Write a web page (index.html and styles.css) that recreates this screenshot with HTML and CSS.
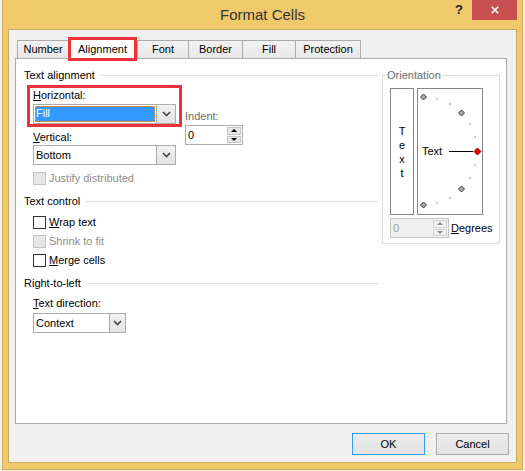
FILE: index.html
```html
<!DOCTYPE html>
<html lang="en">
<head>
    <meta charset="UTF-8">
    <title>Format Cells</title>
    <link rel="stylesheet" href="styles.css">
</head>
<body>
    <div class="window">
        <div class="titlebar">
            <span></span>
            <span class="title">Format Cells</span>
            <div class="controls">
                <span class="help">?</span>
                <span class="close">
                    <svg width="10" height="10" viewBox="0 0 10 10"><path d="M1 1L9 9M9 1L1 9" stroke="#fff" stroke-width="2"/></svg>
                </span>
            </div>
        </div>

        <div class="client">
            <div class="tabs">
                <div class="tab tab-number">Number</div>
                <div class="tab active">Alignment</div>
                <div class="tab tab-font">Font</div>
                <div class="tab tab-border">Border</div>
                <div class="tab tab-fill">Fill</div>
                <div class="tab tab-protection">Protection</div>
            </div>

            <div class="panel">
                <div class="left-col">
                    <div class="group-head">Text alignment</div>

                    <div class="align-row">
                        <div class="highlight">
                            <div class="label"><u>H</u>orizontal:</div>
                            <div class="combo">
                                <span class="combo-value selected">Fill</span>
                                <span class="combo-btn"><svg width="9" height="6" viewBox="0 0 9 6"><path d="M1 1l3.5 3.5L8 1" fill="none" stroke="#444" stroke-width="1.6"/></svg></span>
                            </div>
                        </div>
                        <div class="indent">
                            <div class="label muted">Indent:</div>
                            <div class="spin">
                                <span class="spin-value">0</span>
                                <span class="spin-btns">
                                    <span class="spin-up"></span>
                                    <span class="spin-down"></span>
                                </span>
                            </div>
                        </div>
                    </div>

                    <div class="label field-label vertical-label"><u>V</u>ertical:</div>
                    <div class="combo field-combo">
                        <span class="combo-value">Bottom</span>
                        <span class="combo-btn"><svg width="9" height="6" viewBox="0 0 9 6"><path d="M1 1l3.5 3.5L8 1" fill="none" stroke="#444" stroke-width="1.6"/></svg></span>
                    </div>
                    <div class="check-row justify-row disabled">
                        <span class="checkbox"></span>Justify distributed
                    </div>

                    <div class="group-head">Text control</div>
                    <div class="check-row wrap-row">
                        <span class="checkbox"></span><span><u>W</u>rap text</span>
                    </div>
                    <div class="check-row disabled">
                        <span class="checkbox"></span>Shrink to fit
                    </div>
                    <div class="check-row">
                        <span class="checkbox"></span><span><u>M</u>erge cells</span>
                    </div>

                    <div class="group-head">Right-to-left</div>
                    <div class="label field-label direction-label"><u>T</u>ext direction:</div>
                    <div class="combo field-combo context-combo">
                        <span class="combo-value">Context</span>
                        <span class="combo-btn"><svg width="9" height="6" viewBox="0 0 9 6"><path d="M1 1l3.5 3.5L8 1" fill="none" stroke="#444" stroke-width="1.6"/></svg></span>
                    </div>
                </div>

                <fieldset class="orientation">
                    <legend>Orientation</legend>
                    <div class="orient-body">
                        <div class="orient-boxes">
                            <div class="stacked-text">
                                <span>T</span><span>e</span><span>x</span><span>t</span>
                            </div>
                            <div class="dial">
                                <svg width="64" height="125" viewBox="0 0 64 125">
                                    <g fill="#c8c8c8">
                                        <rect x="18" y="9" width="2" height="2"/>
                                        <rect x="31" y="14" width="2" height="2"/>
                                        <rect x="51" y="34" width="2" height="2"/>
                                        <rect x="56" y="47" width="2" height="2"/>
                                        <rect x="56" y="75" width="2" height="2"/>
                                        <rect x="51" y="88" width="2" height="2"/>
                                        <rect x="31" y="108" width="2" height="2"/>
                                        <rect x="18" y="113" width="2" height="2"/>
                                    </g>
                                    <g fill="#a8a8a8" stroke="#3a3a3a" stroke-width="1">
                                        <polygon points="5.5,5 8.5,8 5.5,11 2.5,8"/>
                                        <polygon points="43.5,21 46.5,24 43.5,27 40.5,24"/>
                                        <polygon points="43.5,97 46.5,100 43.5,103 40.5,100"/>
                                        <polygon points="5.5,113 8.5,116 5.5,119 2.5,116"/>
                                    </g>
                                    <text x="4" y="66" class="dial-text">Text</text>
                                    <line x1="31" y1="62.5" x2="55" y2="62.5" stroke="#000" stroke-width="1"/>
                                    <polygon points="59.5,59 63,62.5 59.5,66 56,62.5" fill="#f00000" stroke="#8a0000" stroke-width="1"/>
                                </svg>
                            </div>
                        </div>
                        <div class="degrees-row">
                            <div class="spin spin-disabled">
                                <span class="spin-value">0</span>
                                <span class="spin-btns">
                                    <span class="spin-up"></span>
                                    <span class="spin-down"></span>
                                </span>
                            </div>
                            <span class="label"><u>D</u>egrees</span>
                        </div>
                    </div>
                </fieldset>
            </div>

            <div class="buttons">
                <button class="btn btn-default">OK</button>
                <button class="btn">Cancel</button>
            </div>
        </div>
    </div>
</body>
</html>
```

FILE: styles.css
```css
* {
    box-sizing: border-box;
}
body {
    margin: 0;
    background: #eeeeee;
    font-family: "Liberation Sans", Arial, sans-serif;
    font-size: 11px;
    line-height: 14px;
    color: #000;
}
.window {
    margin: 0 2px;
    height: 470px;
    background: #f0c96b;
    border: 1px solid #d4b05c;
    border-top: 0;
    padding: 0 5px 6px;
    display: flex;
    flex-direction: column;
}

/* title bar */
.titlebar {
    height: 29px;
    display: grid;
    grid-template-columns: 1fr auto 1fr;
}
.title {
    font-size: 15px;
    line-height: 30px;
    color: #333;
}
.controls {
    display: flex;
    justify-content: flex-end;
    align-items: flex-start;
}
.help {
    width: 26px;
    height: 20px;
    text-align: center;
    font-weight: bold;
    font-size: 13px;
    line-height: 20px;
    color: #222;
}
.close {
    width: 45px;
    height: 20px;
    background: #c75050;
    display: flex;
    align-items: center;
    justify-content: center;
}
.close svg {
    width: 8px;
    height: 8px;
}

/* dialog body */
.client {
    height: 435px;
    background: #f0f0f0;
    border: 1px solid #c8a95f;
    padding: 7px 0 0 6px;
}
.tabs {
    display: flex;
    align-items: flex-end;
    height: 21px;
    padding-left: 2px;
}
.tab {
    height: 18px;
    border: 1px solid #acacac;
    border-bottom: 0;
    margin-right: -1px;
    background: linear-gradient(#f2f2f2, #e8e8e8);
    text-align: center;
    line-height: 17px;
}
.tab-number { width: 52px; }
.tab-font { width: 52px; }
.tab-border { width: 55px; }
.tab-fill { width: 54px; }
.tab-protection { width: 66px; }
.tab.active {
    position: relative;
    z-index: 1;
    width: 69px;
    height: 24px;
    margin-bottom: -3px;
    margin-right: 0;
    border: 3px solid #ee3038;
    background: #fff;
    line-height: 18px;
}

.panel {
    width: 492px;
    height: 366px;
    background: #fff;
    border: 1px solid #acacac;
    padding-left: 8px;
    display: flex;
    gap: 4px;
}
.left-col {
    width: 354px;
}
.group-head {
    margin-top: 9px;
    display: flex;
    align-items: center;
    height: 14px;
}
.group-head::after {
    content: "";
    flex: 1;
    margin-left: 5px;
    border-top: 1px solid #dcdcdc;
}
.label {
    line-height: 14px;
}
.muted {
    color: #6d6d6d;
}

.align-row {
    margin-top: 3px;
    display: flex;
    align-items: flex-start;
}
.highlight {
    margin-left: 3px;
    border: 3px solid #ee3038;
    padding: 0 3px;
}
.highlight .combo {
    margin-top: 2px;
}
/* the indent box hangs down beside the Vertical label */
.indent {
    margin-left: 3px;
    margin-top: 24px;
    margin-bottom: -18px;
}
.indent .spin {
    margin-top: 2px;
    width: 58px;
}

/* combo boxes */
.combo {
    width: 143px;
    height: 20px;
    border: 1px solid #acacac;
    background: #fff;
    display: flex;
}
.combo-value {
    flex: 1;
    padding-left: 2px;
    line-height: 18px;
}
.combo-value.selected {
    margin: 1px;
    padding-left: 1px;
    background: #3399ff;
    color: #fff;
    line-height: 14px;
    outline: 1px dotted #e49b4a;
    outline-offset: -1px;
}
.combo-btn {
    width: 19px;
    border-left: 1px solid #acacac;
    background: linear-gradient(#f2f2f2, #e3e3e3);
    display: flex;
    align-items: center;
    justify-content: center;
}
.field-label {
    margin-left: 9px;
}
.vertical-label {
    margin-top: 3px;
}
.field-combo {
    margin-left: 9px;
    margin-top: 1px;
}
.direction-label {
    margin-top: 6px;
}
.context-combo {
    width: 93px;
    margin-top: 3px;
}
.context-combo .combo-btn {
    width: 16px;
}

/* checkboxes */
.check-row {
    margin-left: 9px;
    margin-top: 5px;
    height: 14px;
    display: flex;
    align-items: center;
    gap: 3px;
}
.justify-row {
    margin-top: 6px;
}
.wrap-row {
    margin-top: 7px;
}
.checkbox {
    width: 13px;
    height: 13px;
    border: 1px solid #333;
    background: #fff;
}
.check-row.disabled {
    color: #8d8d8d;
}
.check-row.disabled .checkbox {
    border-color: #c4c4c4;
    background: #e6e6e6;
}

/* spin boxes */
.spin {
    height: 20px;
    border: 1px solid #acacac;
    background: #fff;
    display: flex;
}
.spin-value {
    flex: 1;
    padding-left: 2px;
    line-height: 18px;
}
.spin-btns {
    width: 16px;
    display: flex;
    flex-direction: column;
    padding: 1px;
    gap: 1px;
}
.spin-up,
.spin-down {
    flex: 1;
    background: #e6e6e6;
    border: 1px solid #c4c4c4;
    display: flex;
    align-items: center;
    justify-content: center;
}
.spin-up::after,
.spin-down::after {
    content: "";
    border-left: 3px solid transparent;
    border-right: 3px solid transparent;
}
.spin-up::after {
    border-bottom: 3px solid #000;
}
.spin-down::after {
    border-top: 3px solid #000;
}
.spin-disabled {
    width: 59px;
    background: #f0f0f0;
    border-color: #c4c4c4;
}
.spin-disabled .spin-value {
    color: #a09aa8;
}
.spin-disabled .spin-up,
.spin-disabled .spin-down {
    background: #f0f0f0;
    border-color: #d4d4d4;
}
.spin-disabled .spin-up::after {
    border-bottom-color: #8a8a8a;
}
.spin-disabled .spin-down::after {
    border-top-color: #8a8a8a;
}

/* orientation group */
.orientation {
    margin: 9px 0 0;
    padding: 0;
    width: 118px;
    height: 176px;
    border: 1px solid #dcdcdc;
    min-inline-size: 0;
}
.orientation legend {
    margin-left: 2px;
    padding: 0 2px;
    line-height: 14px;
    color: #6d6d6d;
}
.orient-body {
    padding: 6px 0 0 7px;
}
.orient-boxes {
    display: flex;
    gap: 3px;
}
.stacked-text {
    width: 24px;
    height: 127px;
    border: 1px solid #828790;
    display: flex;
    flex-direction: column;
    align-items: center;
    justify-content: center;
}
.dial {
    width: 66px;
    height: 127px;
    border: 1px solid #828790;
}
.dial svg {
    display: block;
}
.dial-text {
    font-family: "Liberation Sans", Arial, sans-serif;
    font-size: 11px;
}
.degrees-row {
    margin-top: 3px;
    display: flex;
    align-items: center;
    gap: 2px;
}

/* bottom buttons */
.buttons {
    margin-top: 9px;
    padding-right: 7px;
    display: flex;
    justify-content: flex-end;
    gap: 11px;
}
.btn {
    width: 73px;
    height: 22px;
    border: 1px solid #adadad;
    background: linear-gradient(#ececec, #e2e2e2);
    font-family: "Liberation Sans", Arial, sans-serif;
    font-size: 11px;
    color: #000;
    padding: 0;
}
.btn-default {
    border-color: #3399ff;
}
```
